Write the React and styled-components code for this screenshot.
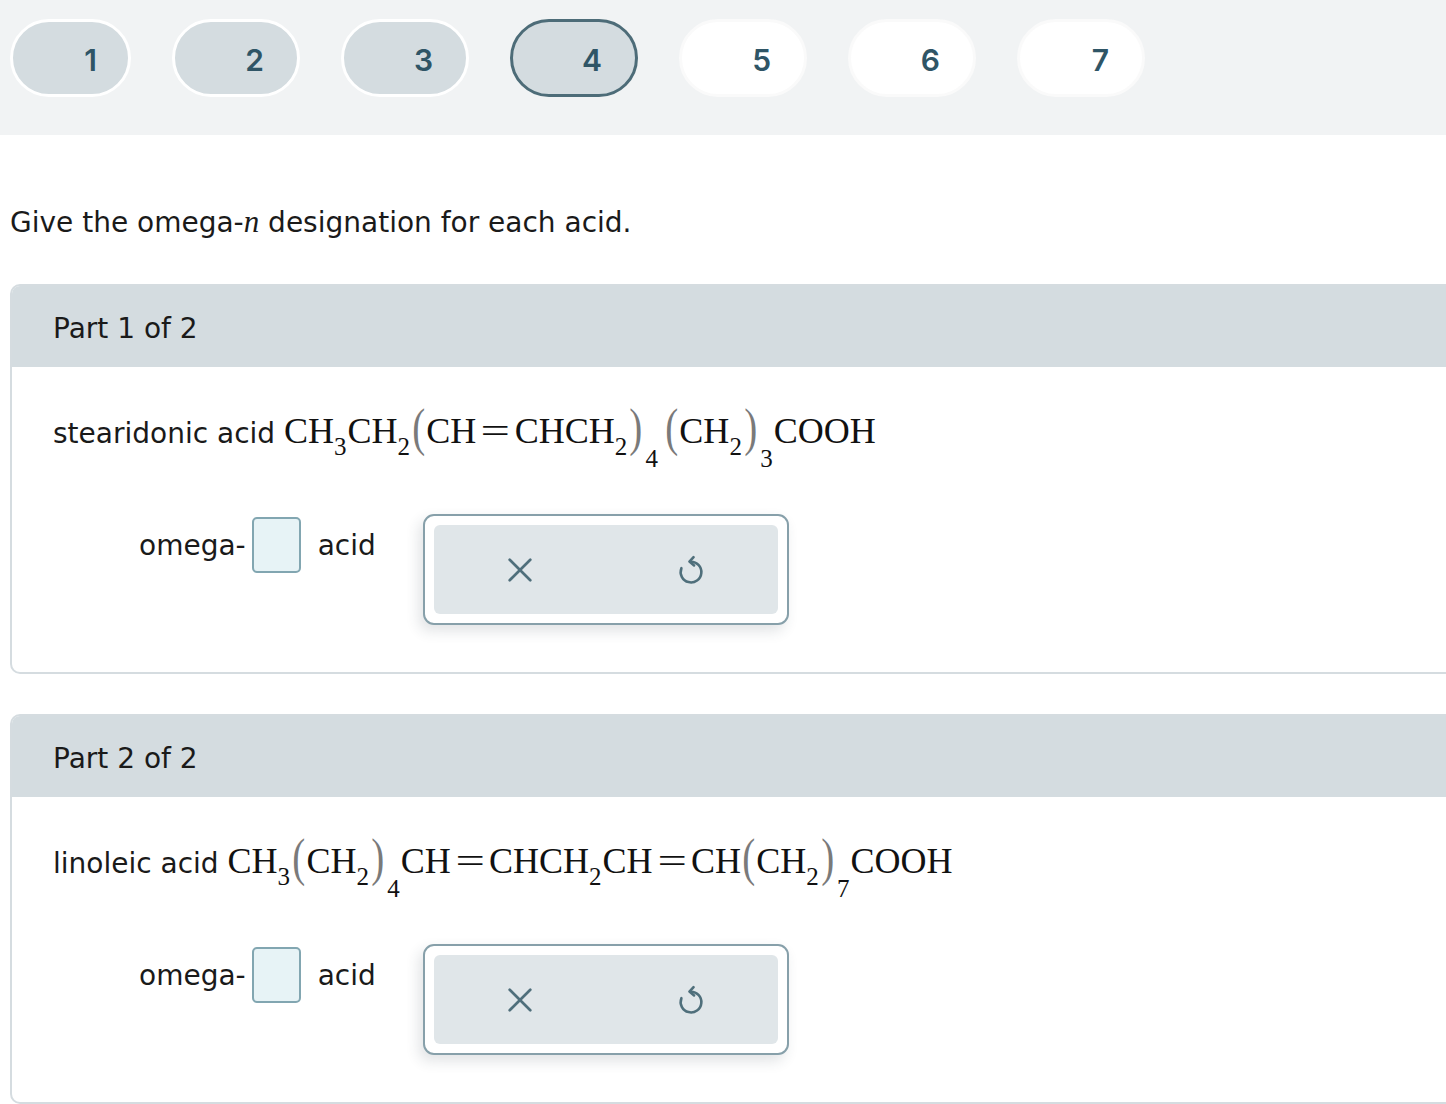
import React from 'react'
import styled, { createGlobalStyle, css } from 'styled-components'

const GlobalStyle = createGlobalStyle`
  body {
    margin: 0;
    background: #fff;
    color: #1a1a1a;
    font-family: "DejaVu Sans", Verdana, sans-serif;
    overflow-x: hidden;
  }
`

const steps = [1, 2, 3, 4, 5, 6, 7]
const CURRENT = 4

const Stearidonic = () => (
  <>
    CH<Sub>3</Sub>CH<Sub>2</Sub>
    <Paren>(</Paren>CH<Eq>=</Eq>CHCH<Sub>2</Sub>
    <Paren>)</Paren>
    <Sub $low $gap>4</Sub>
    <Paren>(</Paren>CH<Sub>2</Sub>
    <Paren>)</Paren>
    <Sub $low>3</Sub>COOH
  </>
)

const Linoleic = () => (
  <>
    CH<Sub>3</Sub>
    <Paren>(</Paren>CH<Sub>2</Sub>
    <Paren>)</Paren>
    <Sub $low>4</Sub>CH<Eq>=</Eq>CHCH<Sub>2</Sub>CH<Eq>=</Eq>CH
    <Paren>(</Paren>CH<Sub>2</Sub>
    <Paren>)</Paren>
    <Sub $low>7</Sub>COOH
  </>
)

const parts = [
  { label: 'stearidonic acid', Formula: Stearidonic },
  { label: 'linoleic acid', Formula: Linoleic },
]

const CloseIcon = () => (
  <svg width="26" height="26" viewBox="0 0 24 24" fill="none" stroke="#4f6f7b" strokeWidth="2.5" strokeLinecap="round">
    <path d="M2.5 2.5 L21.5 21.5 M21.5 2.5 L2.5 21.5" />
  </svg>
)

const UndoIcon = () => (
  <svg width="31" height="31" viewBox="0 0 24 24" fill="none" stroke="#4f6f7b" strokeWidth="2" strokeLinecap="round" strokeLinejoin="round">
    <path d="M11.2 6 A8 8 0 1 1 4.2 11" />
    <path d="M13.6 2.4 L10.4 5.9 L14 8.9" />
  </svg>
)

const App = () => (
  <>
    <GlobalStyle />
    <StepBar>
      {steps.map((n) => (
        <Step key={n} $state={n < CURRENT ? 'done' : n === CURRENT ? 'current' : 'todo'} $first={n === 1}>
          {n}
        </Step>
      ))}
    </StepBar>
    <Main>
      <Prompt>
        Give the omega-<Var>n</Var> designation for each acid.
      </Prompt>
      {parts.map(({ label, Formula }, i) => (
        <Card key={label}>
          <CardHeader>
            Part {i + 1} of {parts.length}
          </CardHeader>
          <CardBody>
            <FormulaLine>
              {label}{' '}
              <Chem>
                <Formula />
              </Chem>
            </FormulaLine>
            <AnswerRow>
              <Blank>
                omega-<AnswerBox />
                <span>acid</span>
              </Blank>
              <ActionBox>
                <ActionInner>
                  <IconButton aria-label="clear">
                    <CloseIcon />
                  </IconButton>
                  <IconButton aria-label="undo">
                    <UndoIcon />
                  </IconButton>
                </ActionInner>
              </ActionBox>
            </AnswerRow>
          </CardBody>
        </Card>
      ))}
    </Main>
  </>
)

export default App

// ------- STYLES -------

// Step bar
const StepBar = styled.nav`
  display: flex;
  gap: 41px;
  height: 135px;
  box-sizing: border-box;
  padding: 19px 10px 0;
  background: #f1f3f4;
`

const Step = styled.div`
  display: flex;
  align-items: center;
  justify-content: flex-end;
  box-sizing: border-box;
  width: ${(p) => (p.$first ? '121px' : '128px')};
  height: 78px;
  padding: 4px ${(p) => (p.$first ? '31px' : '33px')} 0 0;
  border-radius: 39px;
  border: 3px solid #fff;
  background: #d4dce0;
  color: #2f5566;
  font-family: Inter, "Open Sans", sans-serif;
  font-size: 30px;
  font-weight: 600;

  ${(p) =>
    p.$state === 'current' &&
    css`
      border-color: #4d6c78;
    `}

  ${(p) =>
    p.$state === 'todo' &&
    css`
      background: #fff;
      border-color: #fafafa;
    `}
`

// Main
const Main = styled.main`
  padding: 0 0 0 10px;
`

const Prompt = styled.p`
  margin: 0;
  padding-top: 67px;
  line-height: 40px;
  font-size: 28px;
`

const Var = styled.i`
  font-family: "Liberation Serif", "Times New Roman", serif;
  font-size: 31px;
`

const Card = styled.section`
  box-sizing: border-box;
  width: calc(100% + 20px);
  margin-top: 41px;
  border: 2px solid #d5dce0;
  border-radius: 10px;
  overflow: hidden;

  & + & {
    margin-top: 40px;
  }
`

const CardHeader = styled.header`
  display: flex;
  align-items: center;
  height: 81px;
  padding: 3px 0 0 41px;
  box-sizing: border-box;
  background: #d4dce0;
  font-size: 28px;
`

const CardBody = styled.div`
  padding: 33px 0 47px 41px;
`

const FormulaLine = styled.div`
  display: flex;
  align-items: baseline;
  height: 50px;
  line-height: 50px;
  font-size: 28px;
  white-space: pre;
`

const Chem = styled.span`
  font-family: "Liberation Serif", "Times New Roman", serif;
  font-size: 36px;
  color: #111;
`

const Sub = styled.span`
  display: inline-block;
  font-size: 25px;
  line-height: 1;
  transform: translateY(${(p) => (p.$low ? '24px' : '12px')});
  margin-left: ${(p) => (p.$low ? '2px' : '0')};
  margin-right: ${(p) => (p.$gap ? '6px' : '1px')};
`

const Paren = styled.span`
  display: inline-block;
  font-size: 52px;
  line-height: 1;
  color: #7a7a7a;
  transform: translateY(2px) scaleX(0.75);
  margin: 0 -1px;
`

const Eq = styled.span`
  display: inline-block;
  transform: scaleX(1.45);
  margin: 0 9px;
`

const AnswerRow = styled.div`
  display: flex;
  align-items: flex-start;
  margin-top: 64px;
  padding-left: 86px;
`

const Blank = styled.div`
  display: flex;
  align-items: center;
  height: 56px;
  margin-top: 3px;
  font-size: 28px;

  span {
    margin-left: 17px;
  }
`

const AnswerBox = styled.div`
  box-sizing: border-box;
  width: 49px;
  height: 56px;
  margin-left: 6px;
  border: 2px solid #82a6b1;
  border-radius: 5px;
  background: #e7f3f6;
`

const ActionBox = styled.div`
  box-sizing: border-box;
  width: 366px;
  height: 111px;
  margin-left: 47px;
  padding: 9px;
  border: 2px solid #87a0aa;
  border-radius: 11px;
  background: #fff;
  box-shadow: -4px 6px 14px rgba(40, 60, 70, 0.14);
`

const ActionInner = styled.div`
  display: grid;
  grid-template-columns: 1fr 1fr;
  height: 100%;
  border-radius: 6px;
  background: #e0e6e9;
`

const IconButton = styled.button`
  display: flex;
  align-items: center;
  justify-content: center;
  padding: 0;
  border: 0;
  background: transparent;
  cursor: pointer;
`
